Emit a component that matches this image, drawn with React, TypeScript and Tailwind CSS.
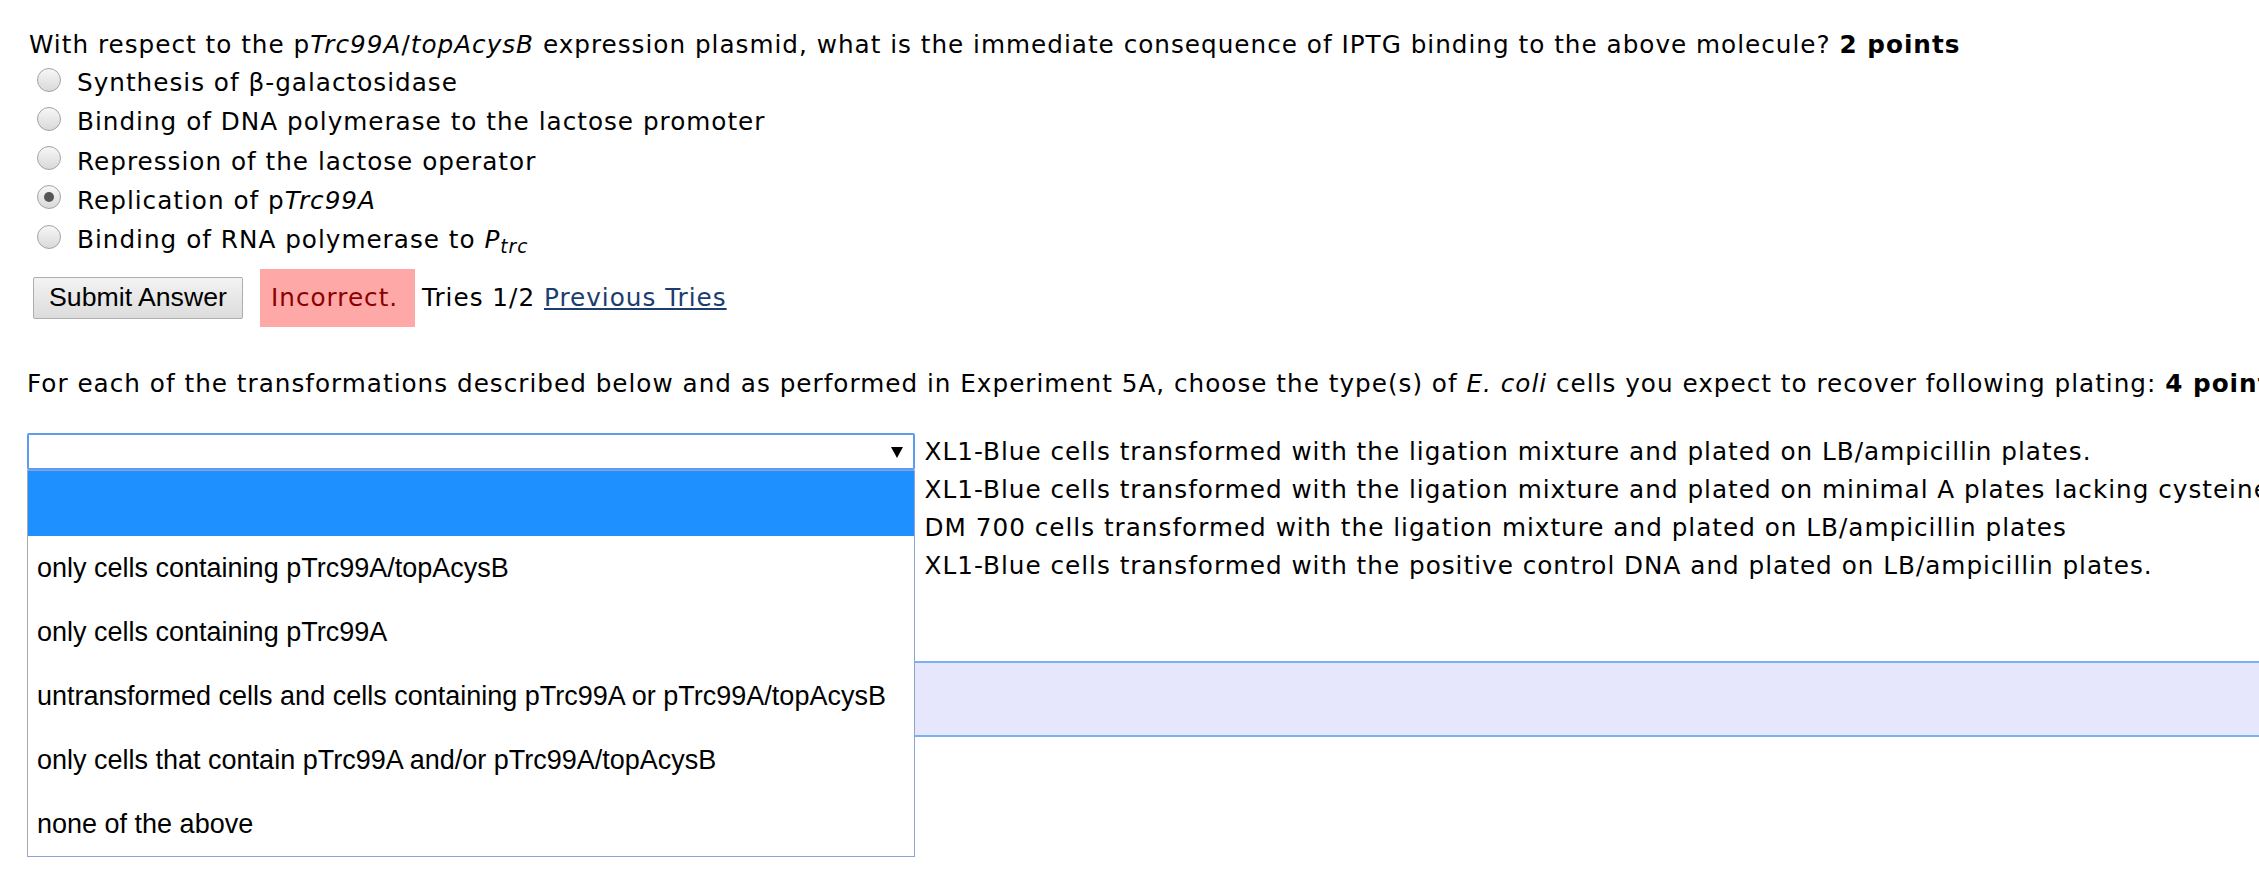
import React from "react";

function Radio({ checked }: { checked?: boolean }) {
  return (
    <span className="ml-[10px] mt-[7.5px] flex h-[24px] w-[24px] shrink-0 items-center justify-center rounded-full border border-[#a3a3a3] bg-linear-to-b from-[#f7f7f7] to-[#d9d9d9]">
      {checked ? <span className="h-[10px] w-[10px] rounded-full bg-[#555555]" /> : null}
    </span>
  );
}

export default function App() {
  const choices: { node: React.ReactNode; checked?: boolean }[] = [
    { node: <>Synthesis of β-galactosidase</> },
    { node: <>Binding of DNA polymerase to the lactose promoter</> },
    { node: <>Repression of the lactose operator</> },
    {
      node: (
        <>
          Replication of p<i>Trc99A</i>
        </>
      ),
      checked: true,
    },
    {
      node: (
        <>
          Binding of RNA polymerase to <i>P</i>
          <sub className="italic">trc</sub>
        </>
      ),
    },
  ];

  const listOptions = [
    "",
    "only cells containing pTrc99A/topAcysB",
    "only cells containing pTrc99A",
    "untransformed cells and cells containing pTrc99A or pTrc99A/topAcysB",
    "only cells that contain pTrc99A and/or pTrc99A/topAcysB",
    "none of the above",
  ];

  const rightLines = [
    "XL1-Blue cells transformed with the ligation mixture and plated on LB/ampicillin plates.",
    "XL1-Blue cells transformed with the ligation mixture and plated on minimal A plates lacking cysteine.",
    "DM 700 cells transformed with the ligation mixture and plated on LB/ampicillin plates",
    "XL1-Blue cells transformed with the positive control DNA and plated on LB/ampicillin plates.",
  ];

  return (
    <div className="relative h-[886px] w-[2259px] overflow-hidden bg-white font-['DejaVu_Sans',Verdana,sans-serif] text-[24.7px] leading-[28px] tracking-[1px] text-black">
      <div className="pl-[27px] pt-[31px]">
        <p className="whitespace-nowrap pl-[2px]">
          With respect to the p<i>Trc99A</i>/<i>topAcysB</i> expression plasmid, what is the immediate
          consequence of IPTG binding to the above molecule? <b>2 points</b>
        </p>

        <div className="mt-[1px] flex flex-col">
          {choices.map((c, i) => (
            <div key={i} className="flex h-[39.3px] items-start">
              <Radio checked={c.checked} />
              <span className="ml-[16px] whitespace-nowrap pt-[9px]">{c.node}</span>
            </div>
          ))}
        </div>

        <div className="mt-[12.5px] flex h-[58px] items-center">
          <button className="ml-[6px] flex h-[42px] w-[210px] items-center justify-center rounded-[2px] border border-[#adadad] bg-linear-to-b from-[#f3f3f3] to-[#dcdcdc] pb-[2px] font-['Liberation_Sans',Arial,sans-serif] text-[26.67px] tracking-normal text-black">
            Submit Answer
          </button>
          <span className="ml-[17px] flex h-[58px] w-[155px] items-center bg-[#ffa8a8] pl-[11px] text-[#8b0000]">
            Incorrect.
          </span>
          <span className="ml-[7px] whitespace-nowrap">
            Tries 1/2{" "}
            <a href="#" className="text-[#1b3d6f] underline">
              Previous Tries
            </a>
          </span>
        </div>

        <p className="mt-[43px] whitespace-nowrap">
          For each of the transformations described below and as performed in Experiment 5A, choose the type(s)
          of <i>E. coli</i> cells you expect to recover following plating: <b>4 points</b>
        </p>

        <div className="mt-[35px] flex items-start">
          <div className="relative shrink-0">
            <div className="flex h-[37.5px] w-[887.6px] items-center justify-end rounded-[2px] border-2 border-[#5e9cf2] bg-white pr-[9.6px]">
              <svg width="12" height="11" viewBox="0 0 12 11" className="mt-[1px]">
                <polygon points="0,0 12,0 6,11" fill="#000" />
              </svg>
            </div>
            <div className="absolute left-0 top-full z-10 w-[887.6px] border border-[#8aa4d6] border-l-[#a9a9a9] bg-white font-['Liberation_Sans',Arial,sans-serif] text-[27px] leading-[30px] tracking-normal">
              {listOptions.map((o, i) => (
                <div
                  key={i}
                  className={
                    i === 0
                      ? "flex h-[64.1px] items-center bg-[#1e90ff] pl-[9px] text-white"
                      : "flex h-[64.1px] items-center whitespace-nowrap pl-[9px] text-black"
                  }
                >
                  {o}
                </div>
              ))}
            </div>
          </div>
          <div className="ml-[10px] flex flex-col leading-[38px]">
            {rightLines.map((l, i) => (
              <div key={i} className="whitespace-nowrap">
                {l}
              </div>
            ))}
          </div>
        </div>

        <div className="mt-[76px] h-[76px] border-y-2 border-[#78b2f2] bg-[#e6e6fc]" />
      </div>
    </div>
  );
}
